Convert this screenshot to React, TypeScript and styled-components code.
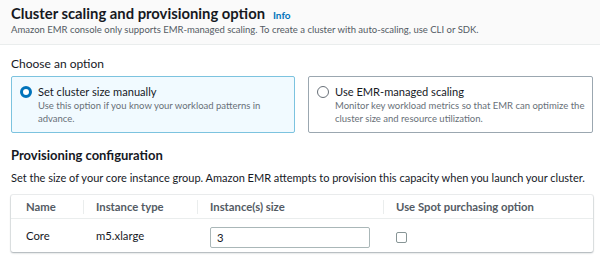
import React from "react";
import styled, { createGlobalStyle } from "styled-components";

const Global = createGlobalStyle`
  html, body { margin: 0; padding: 0; background: #ffffff; }
  body { font-family: Lato, "Liberation Sans", Arial, sans-serif; color: #16191f; }
  * { box-sizing: border-box; }
`;

const Page = styled.div`
  width: 600px;
  height: 259px;
  overflow: hidden;
  display: flex;
  flex-direction: column;
`;

const Header = styled.header`
  background: #fafafa;
  border-bottom: 1px solid #eaeded;
  height: 45px;
  padding: 4px 11px 0;
  display: flex;
  flex-direction: column;
`;

const TitleRow = styled.div`
  display: flex;
  align-items: baseline;
  gap: 8px;
`;

const Title = styled.h2`
  margin: 0;
  font-size: 14.8px;
  line-height: 19px;
  font-weight: 700;
  color: #16191f;
`;

const InfoLink = styled.a`
  font-size: 10px;
  font-weight: 700;
  color: #0073bb;
  text-decoration: none;
`;

const HeaderDesc = styled.p`
  margin: 0;
  font-size: 9.5px;
  line-height: 13px;
  color: #545b64;
`;

const Body = styled.div`
  padding: 11px 11px 0 11px;
  display: flex;
  flex-direction: column;
`;

const Label = styled.div`
  font-size: 12px;
  line-height: 16px;
  color: #16191f;
`;

const Options = styled.div`
  margin-top: 4px;
  display: grid;
  grid-template-columns: 284px 285px;
  column-gap: 13px;
`;

const Card = styled.label<{ $selected?: boolean }>`
  height: 57px;
  border: 1px solid ${(p) => (p.$selected ? "#7cc3df" : "#9ba7b0")};
  background: ${(p) => (p.$selected ? "#f1faff" : "#ffffff")};
  border-radius: 2px;
  padding: 7px 4px 0 8px;
  display: grid;
  grid-template-columns: 12px 1fr;
  column-gap: 6px;
  align-items: start;
`;

const Radio = styled.span<{ $checked?: boolean }>`
  width: 12px;
  height: 12px;
  margin-top: 1.5px;
  border-radius: 50%;
  border: ${(p) => (p.$checked ? "3.5px solid #0073bb" : "1px solid #687078")};
  background: #fff;
`;

const OptionTitle = styled.div`
  font-size: 11.1px;
  line-height: 15px;
  color: #16191f;
`;

const OptionDesc = styled.div`
  font-size: 9.5px;
  line-height: 13px;
  color: #687078;
`;

const SectionTitle = styled.h3`
  margin: 13px 0 0;
  font-size: 13px;
  line-height: 18px;
  font-weight: 700;
  color: #16191f;
`;

const SectionDesc = styled.p`
  margin: 6px 0 0;
  font-size: 11px;
  line-height: 15px;
  color: #16191f;
  white-space: nowrap;
`;

const Table = styled.div`
  margin-top: 10px;
  width: 582px;
  border-radius: 2px;
  box-shadow: 0 1px 2px rgba(0, 28, 36, 0.3), 0 0 0 1px rgba(0, 28, 36, 0.07);
  background: #fff;
`;

const Row = styled.div<{ $head?: boolean }>`
  display: grid;
  grid-template-columns: 72px 114px 186px 1fr;
  height: ${(p) => (p.$head ? "24px" : "33px")};
  align-items: center;
  border-bottom: ${(p) => (p.$head ? "1px solid #eaeded" : "none")};
`;

const Cell = styled.div<{ $head?: boolean; $first?: boolean }>`
  position: relative;
  padding-left: ${(p) => (p.$first ? "15px" : "13px")};
  font-size: 11.3px;
  font-weight: ${(p) => (p.$head ? 700 : 400)};
  color: ${(p) => (p.$head ? "#545b64" : "#16191f")};
  height: 100%;
  display: flex;
  align-items: center;

  &::before {
    content: "";
    display: ${(p) => (p.$head && !p.$first ? "block" : "none")};
    position: absolute;
    left: 0;
    top: 5px;
    height: 14px;
    width: 1px;
    background: #eaeded;
  }
`;

const Input = styled.input`
  width: 160px;
  height: 21px;
  margin-top: 4px;
  border: 1px solid #aab7b8;
  border-radius: 2px;
  padding: 0 6px;
  font-family: inherit;
  font-size: 11.3px;
  color: #16191f;
  background: #fff;
  outline: none;
`;

const Check = styled.span`
  width: 11px;
  height: 11px;
  margin-top: 4px;
  border: 1px solid #879596;
  border-radius: 2px;
  background: #fff;
`;

export default function App() {
  return (
    <Page>
      <Global />
      <Header>
        <TitleRow>
          <Title>Cluster scaling and provisioning option</Title>
          <InfoLink href="#">Info</InfoLink>
        </TitleRow>
        <HeaderDesc>
          Amazon EMR console only supports EMR-managed scaling. To create a cluster with auto-scaling, use CLI or SDK.
        </HeaderDesc>
      </Header>
      <Body>
        <Label>Choose an option</Label>
        <Options>
          <Card $selected>
            <Radio $checked />
            <div>
              <OptionTitle>Set cluster size manually</OptionTitle>
              <OptionDesc>Use this option if you know your workload patterns in advance.</OptionDesc>
            </div>
          </Card>
          <Card>
            <Radio />
            <div>
              <OptionTitle>Use EMR-managed scaling</OptionTitle>
              <OptionDesc>
                Monitor key workload metrics so that EMR can optimize the cluster size and resource utilization.
              </OptionDesc>
            </div>
          </Card>
        </Options>
        <SectionTitle>Provisioning configuration</SectionTitle>
        <SectionDesc>
          Set the size of your core instance group. Amazon EMR attempts to provision this capacity when you launch your cluster.
        </SectionDesc>
        <Table>
          <Row $head>
            <Cell $head $first>Name</Cell>
            <Cell $head>Instance type</Cell>
            <Cell $head>Instance(s) size</Cell>
            <Cell $head>Use Spot purchasing option</Cell>
          </Row>
          <Row>
            <Cell $first>Core</Cell>
            <Cell>m5.xlarge</Cell>
            <Cell>
              <Input defaultValue="3" />
            </Cell>
            <Cell>
              <Check />
            </Cell>
          </Row>
        </Table>
      </Body>
    </Page>
  );
}
